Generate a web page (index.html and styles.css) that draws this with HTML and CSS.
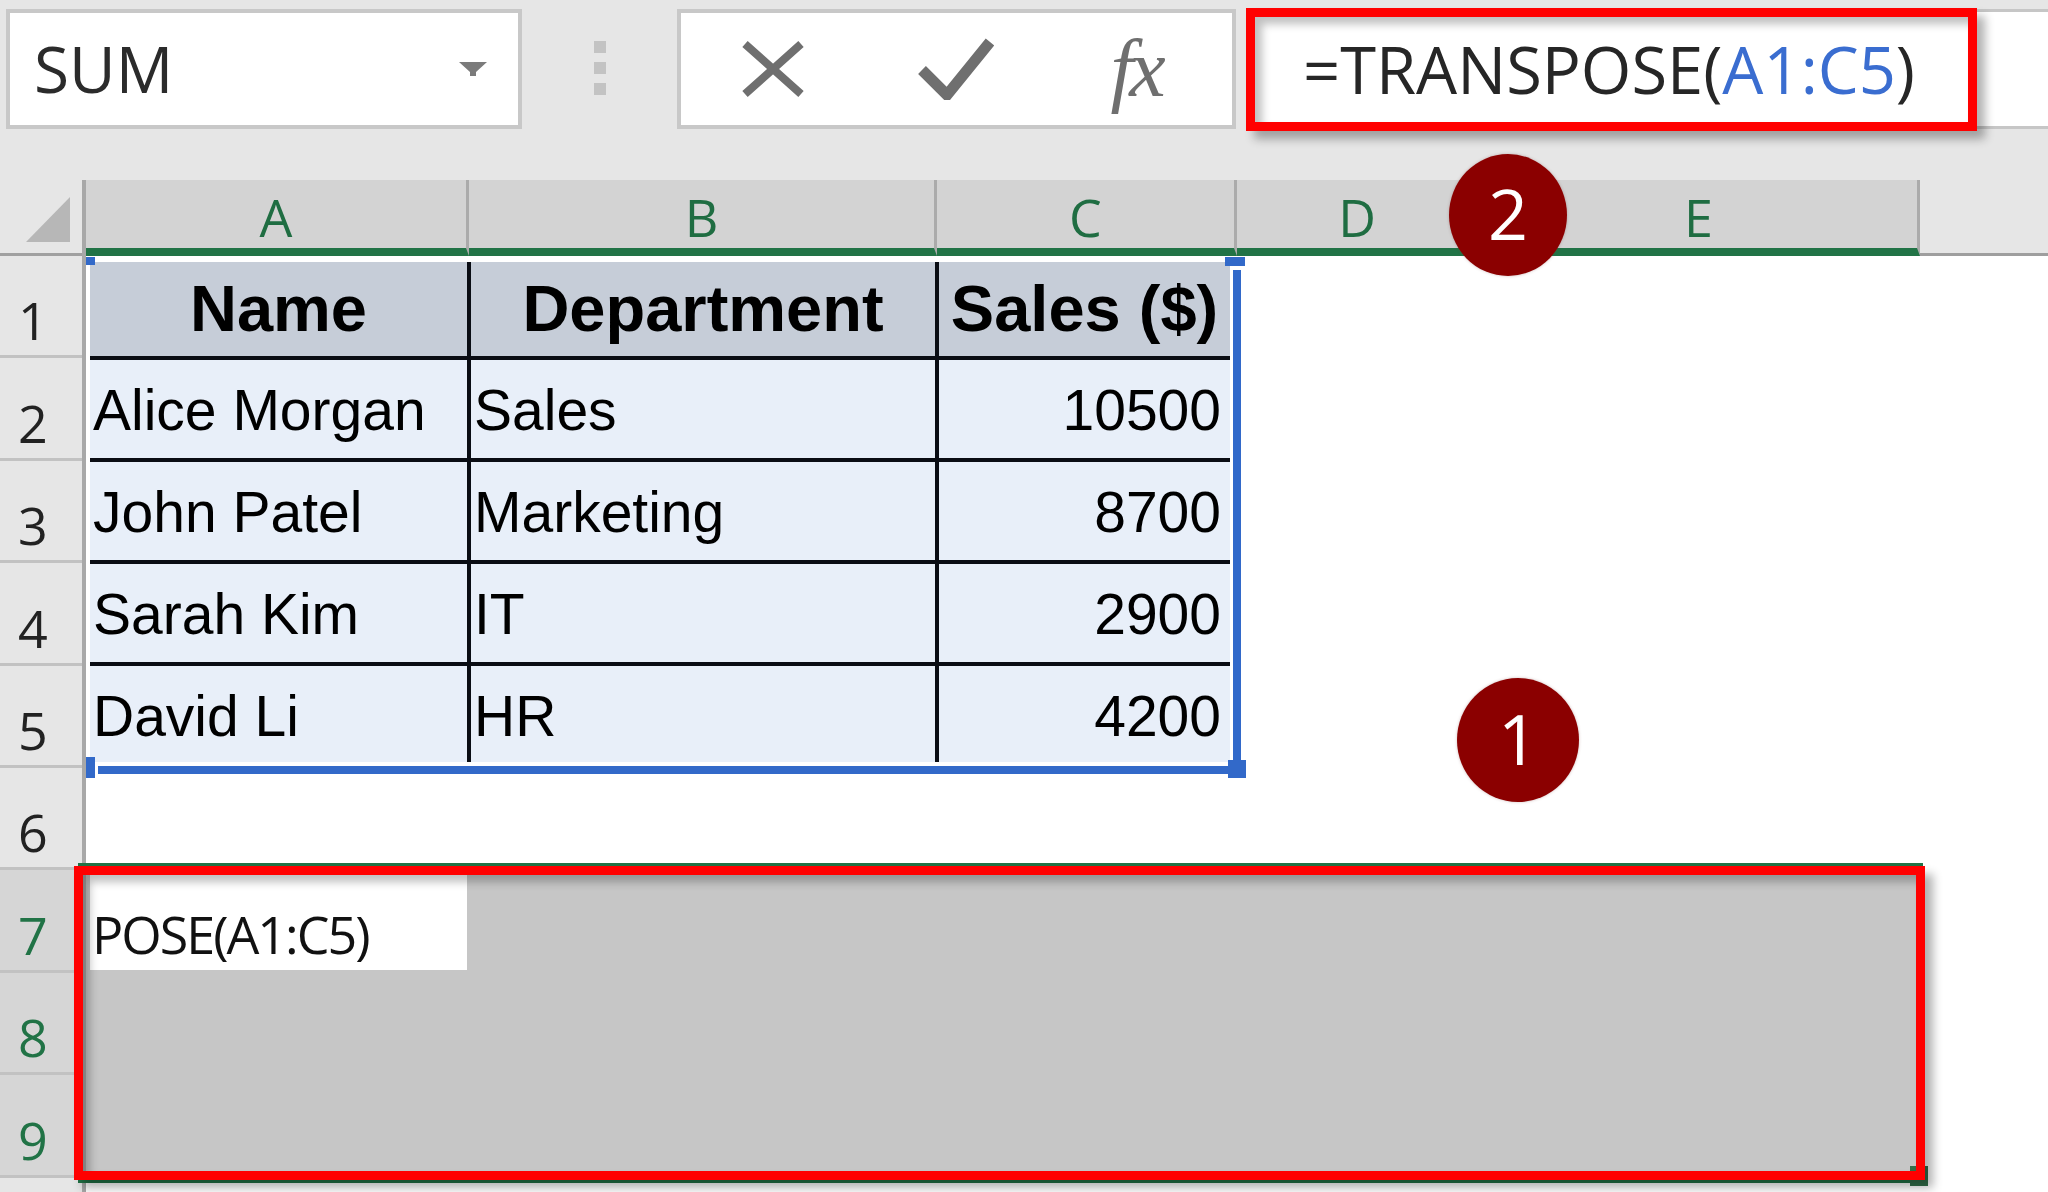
FILE: index.html
```html
<!DOCTYPE html>
<html>
  <head>
    <title>TRANSPOSE - Excel</title>
    <link rel="stylesheet" href="styles.css">
  </head>
  <body>
    <div class="app">
      <div class="toolbar">
        <div class="name-box">
          <span class="name-box-text">SUM</span>
          <svg class="name-box-arrow" width="28" height="16" viewBox="0 0 28 16">
            <path d="M0 1h28l-11 10v4h-6v-4z" fill="#7b7b7b" />
          </svg>
        </div>
        <div class="toolbar-grip"><span></span><span></span><span></span></div>
        <div class="fx-buttons">
          <svg class="fx-icon" width="66" height="58" viewBox="0 0 66 58">
            <path d="M5 4L61 54M61 4L5 54" stroke="#6f6f6f" stroke-width="8" fill="none" />
          </svg>
          <svg class="fx-icon" width="76" height="62" viewBox="0 0 76 62">
            <path d="M4 32L29 57L72 4" stroke="#6f6f6f" stroke-width="11" fill="none" />
          </svg>
          <span class="fx-label">fx</span>
        </div>
        <div class="formula-bar">
          <span class="formula-text">=TRANSPOSE(<span class="formula-ref">A1:C5</span>)</span>
        </div>
      </div>

      <div class="sheet">
        <div class="row-heads">
          <div class="corner">
            <svg width="44" height="45" viewBox="0 0 44 45">
              <path d="M44 0V45H0z" fill="#b7b7b7" />
            </svg>
          </div>
          <div class="row-head">1</div>
          <div class="row-head">2</div>
          <div class="row-head">3</div>
          <div class="row-head">4</div>
          <div class="row-head">5</div>
          <div class="row-head">6</div>
          <div class="row-head selected">7</div>
          <div class="row-head selected">8</div>
          <div class="row-head selected">9</div>
          <div class="row-head last"></div>
        </div>

        <div class="cells">
          <div class="col-heads">
            <div class="col-head col-a">A</div>
            <div class="col-head col-b">B</div>
            <div class="col-head col-c">C</div>
            <div class="col-head col-d">D</div>
            <div class="col-head col-e">E</div>
            <div class="col-head-rest"></div>
          </div>

          <div class="band">
            <div class="data-table">
              <div class="data-grid">
                <div class="th">Name</div>
                <div class="th">Department</div>
                <div class="th">Sales ($)</div>

                <div class="td">Alice Morgan</div>
                <div class="td">Sales</div>
                <div class="td num">10500</div>

                <div class="td">John Patel</div>
                <div class="td">Marketing</div>
                <div class="td num">8700</div>

                <div class="td">Sarah Kim</div>
                <div class="td">IT</div>
                <div class="td num">2900</div>

                <div class="td">David Li</div>
                <div class="td">HR</div>
                <div class="td num">4200</div>
              </div>

              <!-- range reference highlight for A1:C5 -->
              <div class="ref-line ref-right"></div>
              <div class="ref-line ref-bottom"></div>
              <div class="ref-handle ref-tl"></div>
              <div class="ref-handle ref-tr"></div>
              <div class="ref-handle ref-bl"></div>
              <div class="ref-handle ref-br"></div>
            </div>
          </div>

          <div class="row-blank"></div>

          <div class="band-selected">
            <div class="selection-fill">
              <div class="active-cell">POSE(A1:C5)</div>
            </div>
          </div>
        </div>
      </div>

      <!-- selection outline and annotations -->
      <div class="selection-outline"></div>
      <div class="fill-handle"></div>
      <div class="callout callout-formula"></div>
      <div class="callout callout-range"></div>
      <div class="badge badge-2">2</div>
      <div class="badge badge-1">1</div>
    </div>
  </body>
</html>
```

FILE: styles.css
```css
/* Excel TRANSPOSE screenshot */
html,
body {
  margin: 0;
  padding: 0;
  background: #ffffff;
}

.app {
  position: relative;
  width: 2048px;
  height: 1192px;
  overflow: hidden;
  font-family: "Open Sans", "Noto Sans", sans-serif;
}

/* Top bar: name box + formula bar */
.toolbar {
  display: flex;
  align-items: flex-start;
  height: 180px;
  box-sizing: border-box;
  padding: 9px 0 0 6px;
  background: #e6e6e6;
}

.name-box {
  display: flex;
  align-items: center;
  justify-content: space-between;
  width: 516px;
  height: 120px;
  box-sizing: border-box;
  padding: 0 31px 0 24px;
  background: #ffffff;
  border: 4px solid #c8c8c8;
}

.name-box-text {
  font-size: 64px;
  line-height: 64px;
  color: #2b2b2b;
}

.toolbar-grip {
  display: flex;
  flex-direction: column;
  gap: 9px;
  margin: 32px 0 0 72px;
}

.toolbar-grip span {
  display: block;
  width: 12px;
  height: 12px;
  background: #c3c3c3;
}

.fx-buttons {
  display: grid;
  grid-template-columns: repeat(3, 1fr);
  align-items: center;
  justify-items: center;
  width: 559px;
  height: 120px;
  box-sizing: border-box;
  margin-left: 71px;
  background: #ffffff;
  border: 4px solid #c8c8c8;
}

.fx-label {
  font-family: "Liberation Serif", "Times New Roman", serif;
  font-style: italic;
  font-size: 82px;
  line-height: 82px;
  color: #6f6f6f;
  letter-spacing: -4px;
  margin-right: 8px;
}

.formula-bar {
  flex: 1;
  display: flex;
  align-items: center;
  height: 120px;
  box-sizing: border-box;
  margin-left: 11px;
  padding-left: 53px;
  background: #ffffff;
  border: 3px solid #c6c6c6;
  border-right: none;
}

.formula-text {
  font-size: 65px;
  line-height: 65px;
  color: #262626;
  white-space: nowrap;
}

.formula-ref {
  color: #3a6dd0;
}

/* Sheet */
.sheet {
  display: flex;
  height: 1012px;
  background: #ffffff;
}

.row-heads {
  display: flex;
  flex-direction: column;
  width: 86px;
  box-sizing: border-box;
  background: #e6e6e6;
  border-right: 4px solid #a8a8a8;
}

.corner {
  display: flex;
  align-items: flex-end;
  justify-content: flex-end;
  flex-shrink: 0;
  height: 76px;
  box-sizing: border-box;
  padding: 0 12px 11px 0;
  border-bottom: 3px solid #a0a0a0;
}

.row-head {
  display: flex;
  align-items: flex-end;
  height: 102.4px;
  flex-shrink: 0;
  box-sizing: border-box;
  padding: 0 0 9px 18px;
  border-bottom: 3px solid #c2c2c2;
  font-size: 52px;
  line-height: 52px;
  color: #222222;
}

.row-head.selected {
  background: #d6d6d6;
  color: #217346;
}

.row-head.last {
  flex: 1;
  min-height: 0;
  border-bottom: none;
}

.cells {
  flex: 1;
  display: flex;
  flex-direction: column;
}

.col-heads {
  display: flex;
  flex-shrink: 0;
  height: 76px;
}

.col-head {
  height: 76px;
  box-sizing: border-box;
  padding-top: 11px;
  background: #d3d3d3;
  border-bottom: 8px solid #217346;
  border-right: 3px solid #ababab;
  text-align: center;
  font-size: 52px;
  line-height: 52px;
  color: #1f6d42;
}

.col-a { width: 383px; }
.col-b { width: 468px; }
.col-c { width: 300px; }
.col-d { width: 243px; }
.col-e { width: 440px; }

.col-head-rest {
  flex: 1;
  background: #e6e6e6;
  border-bottom: 3px solid #9e9e9e;
}

/* Rows 1-5: the data table */
.band {
  display: flex;
  flex-shrink: 0;
  height: 512px;
}

.data-table {
  position: relative;
  width: 1151px;
  box-sizing: border-box;
  padding: 6px 0 0 4px;
}

.data-grid {
  display: grid;
  grid-template-columns: 377px 464px 291px;
  grid-template-rows: 94px 98px 98px 98px 96px;
  gap: 4px;
  width: 1140px;
  background: #0a0d14;
  font-family: "Liberation Sans", Arial, sans-serif;
  color: #000000;
}

.th {
  padding-top: 14px;
  background: #c6cdd8;
  text-align: center;
  font-weight: bold;
  font-size: 65px;
  line-height: 65px;
  white-space: nowrap;
}

.td {
  padding: 22px 9px 0 3px;
  background: #e8eff9;
  font-size: 57px;
  line-height: 57px;
  white-space: nowrap;
}

.td.num {
  text-align: right;
}

.ref-line,
.ref-handle {
  position: absolute;
  background: #3269c9;
}

.ref-right {
  left: 1147px;
  top: 14px;
  width: 8px;
  height: 504px;
}

.ref-bottom {
  left: 12px;
  top: 510px;
  width: 1143px;
  height: 8px;
}

.ref-tl { left: 0; top: 1px; width: 9px; height: 8px; }
.ref-tr { left: 1139px; top: 1px; width: 20px; height: 9px; }
.ref-bl { left: 0; top: 501px; width: 9px; height: 21px; }
.ref-br { left: 1142px; top: 504px; width: 18px; height: 18px; }

.row-blank {
  flex-shrink: 0;
  height: 102.4px;
}

/* Rows 7-9: selected output range */
.band-selected {
  display: flex;
  flex-shrink: 0;
  height: 307.2px;
}

.selection-fill {
  width: 1834px;
  box-sizing: border-box;
  padding: 4px 0 0 4px;
  background: #c6c6c6;
}

.active-cell {
  width: 377px;
  height: 96px;
  box-sizing: border-box;
  padding: 34px 0 0 2px;
  background: #ffffff;
  font-size: 52px;
  line-height: 52px;
  letter-spacing: -2px;
  color: #111111;
  white-space: nowrap;
  overflow: hidden;
}

/* Overlays */
.selection-outline {
  position: absolute;
  left: 78px;
  top: 863px;
  width: 1845px;
  height: 320px;
  box-sizing: border-box;
  border: 5px solid #217346;
}

.fill-handle {
  position: absolute;
  left: 1910px;
  top: 1166px;
  width: 18px;
  height: 20px;
  background: #32704a;
}

.callout {
  position: absolute;
  box-sizing: border-box;
  border: 9px solid #ff0000;
  box-shadow: 8px 8px 9px rgba(0, 0, 0, 0.3),
    inset 7px 7px 9px rgba(0, 0, 0, 0.25);
}

.callout-formula {
  left: 1246px;
  top: 8px;
  width: 731px;
  height: 123px;
}

.callout-range {
  left: 74px;
  top: 866px;
  width: 1851px;
  height: 314px;
}

.badge {
  position: absolute;
  display: flex;
  align-items: center;
  justify-content: center;
  box-sizing: border-box;
  padding-bottom: 4px;
  border-radius: 50%;
  background: #8b0000;
  box-shadow: 0 0 3px rgba(120, 60, 60, 0.35);
  color: #ffffff;
  font-size: 70px;
  line-height: 70px;
}

.badge-2 {
  left: 1449px;
  top: 154px;
  width: 118px;
  height: 122px;
}

.badge-1 {
  left: 1457px;
  top: 678px;
  width: 122px;
  height: 124px;
}
```
